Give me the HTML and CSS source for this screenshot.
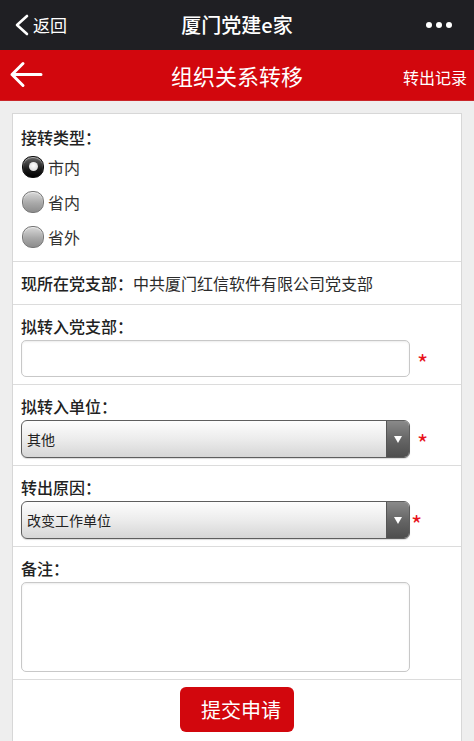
FILE: index.html
```html
<!DOCTYPE html>
<html lang="zh-CN">
<head>
<meta charset="utf-8">
<title>组织关系转移</title>
<link rel="stylesheet" href="styles.css">
</head>
<body>
<div class="topbar">
  <div class="top-left">
    <svg class="chev" width="16" height="24" viewBox="0 0 16 24"><polyline points="13,3 3,12 13,21" fill="none" stroke="#fff" stroke-width="2.6" stroke-linecap="round" stroke-linejoin="round"/></svg>
    <span class="back-text">返回</span>
  </div>
  <div class="top-title">厦门党建e家</div>
  <div class="top-right"><span class="dot"></span><span class="dot"></span><span class="dot"></span></div>
</div>
<div class="navbar">
  <div class="nav-left">
    <svg width="34" height="28" viewBox="0 0 34 28"><path d="M3 13.5 H32 M14 2.5 L3 13.5 L14 24.5" fill="none" stroke="#fff" stroke-width="3" stroke-linecap="round" stroke-linejoin="round"/></svg>
  </div>
  <div class="nav-title">组织关系转移</div>
  <div class="nav-right">转出记录</div>
</div>
<div class="main">
  <div class="card">
    <div class="row row-type">
      <div class="label">接转类型：</div>
      <div class="radios">
        <div class="radio-item"><span class="radio checked"><span class="radio-dot"></span></span><span class="radio-text">市内</span></div>
        <div class="radio-item"><span class="radio"></span><span class="radio-text">省内</span></div>
        <div class="radio-item"><span class="radio"></span><span class="radio-text">省外</span></div>
      </div>
    </div>
    <div class="row row-info">
      <span class="label">现所在党支部：</span><span class="value">中共厦门红信软件有限公司党支部</span>
    </div>
    <div class="row row-field">
      <div class="label">拟转入党支部：</div>
      <div class="field-line">
        <div class="text-input"></div>
        <span class="star">*</span>
      </div>
    </div>
    <div class="row row-field">
      <div class="label">拟转入单位：</div>
      <div class="field-line">
        <div class="select"><span class="select-text">其他</span><span class="select-btn"><span class="tri"></span></span></div>
        <span class="star">*</span>
      </div>
    </div>
    <div class="row row-field">
      <div class="label">转出原因：</div>
      <div class="field-line">
        <div class="select"><span class="select-text">改变工作单位</span><span class="select-btn"><span class="tri"></span></span></div>
        <span class="star tight">*</span>
      </div>
    </div>
    <div class="row row-field">
      <div class="label">备注：</div>
      <div class="field-line">
        <div class="textarea"></div>
      </div>
    </div>
    <div class="row-submit">
      <div class="btn">提交申请</div>
    </div>
  </div>
</div>
</body>
</html>
```
FILE: styles.css
```css
* { box-sizing: border-box; }
html, body { margin: 0; padding: 0; }
body {
  width: 474px;
  min-height: 741px;
  background: #eeeeee;
  font-family: "Noto Sans CJK SC", "Noto Sans", "Liberation Sans", sans-serif;
  color: #2a2a2a;
  overflow: hidden;
}
.topbar {
  height: 50px;
  background: #1f1f23;
  display: grid;
  grid-template-columns: 1fr auto 1fr;
  align-items: center;
  color: #fff;
}
.top-left {
  display: flex;
  align-items: center;
  padding-left: 14px;
}
.chev { display: block; margin-right: 3px; }
.back-text { font-size: 17px; line-height: 24px; }
.top-title { font-size: 20px; font-weight: 500; line-height: 28px; }
.top-right {
  display: flex;
  justify-content: flex-end;
  gap: 4px;
  padding-right: 22px;
}
.dot {
  width: 6px; height: 6px;
  border-radius: 50%;
  background: #fff;
}
.navbar {
  height: 51px;
  background: #d2070d;
  border-bottom: 1px solid #c9262a;
  display: grid;
  grid-template-columns: 1fr auto 1fr;
  align-items: center;
  color: #fff;
}
.nav-left { padding-left: 9px; display: flex; align-items: center; }
.nav-left svg { display: block; }
.nav-title { font-size: 22px; line-height: 30px; }
.nav-right {
  text-align: right;
  font-size: 16px;
  padding-right: 7px;
  padding-top: 3px;
}
.main {
  padding: 12px 12px 0 12px;
}
.card {
  background: #fff;
  border: 1px solid #d7d7d7;
  border-bottom: none;
  min-height: 640px;
}
.row {
  border-bottom: 1px solid #dcdcdc;
  padding: 0 8px;
}
.label {
  font-size: 16px;
  font-weight: 500;
  line-height: 24px;
  color: #222;
}
.row-type { padding-top: 11px; padding-bottom: 7px; }
.radio-item {
  height: 35px;
  display: flex;
  align-items: center;
}
.radio {
  width: 22px; height: 22px;
  margin-left: 1px;
  margin-right: 4px;
  border-radius: 10px;
  border: 1px solid #777;
  background: linear-gradient(#d8d8d8, #a9a9a9 55%, #8d8d8d);
  box-shadow: inset 0 1px 1px rgba(255,255,255,0.5);
  display: flex;
  align-items: center;
  justify-content: center;
}
.radio.checked {
  border: 1px solid #111;
  background: linear-gradient(#666, #1c1c1c 60%, #000);
}
.radio-dot {
  width: 9px; height: 9px;
  border-radius: 50%;
  background: radial-gradient(circle at 50% 40%, #fff, #d0d0d0);
}
.radio-text { font-size: 16px; line-height: 22px; color: #333; }
.row-info {
  padding-top: 10px;
  padding-bottom: 10px;
  line-height: 22px;
}
.row-info .label { line-height: 22px; }
.value { font-size: 16px; color: #2b2b2b; }
.row-field { padding-top: 9px; padding-bottom: 7px; }
.field-line {
  display: flex;
  align-items: center;
  margin-top: 2px;
}
.text-input {
  width: 389px;
  height: 37px;
  border: 1px solid #c8c8c8;
  border-radius: 5px;
  background: #fff;
  box-shadow: inset 0 1px 2px rgba(0,0,0,0.08);
}
.textarea {
  width: 389px;
  height: 90px;
  border: 1px solid #c8c8c8;
  border-radius: 5px;
  background: #fff;
  box-shadow: inset 0 1px 2px rgba(0,0,0,0.08);
}
.select {
  width: 389px;
  height: 38px;
  border: 1px solid #5e5e5e;
  border-radius: 6px;
  background: linear-gradient(#fdfdfd, #ececec 50%, #d6d6d6);
  display: flex;
  align-items: stretch;
  overflow: hidden;
  box-shadow: 0 1px 1px rgba(0,0,0,0.15);
}
.select-text {
  flex: 1;
  font-size: 14px;
  line-height: 36px;
  padding-left: 5px;
  color: #222;
}
.select-btn {
  width: 23px;
  background: linear-gradient(#8a8a8a, #666 50%, #4e4e4e);
  border-left: 1px solid #555;
  display: flex;
  align-items: center;
  justify-content: center;
}
.tri {
  width: 0; height: 0;
  border-left: 4px solid transparent;
  border-right: 4px solid transparent;
  border-top: 7px solid #fff;
}
.star {
  color: #e8121a;
  font-size: 24px;
  font-weight: 400;
  line-height: 24px;
  margin-left: 7px;
  padding-top: 8px;
}
.star.tight { margin-left: 1px; }
.row-submit {
  padding-top: 7px;
  display: flex;
  justify-content: center;
}
.btn {
  width: 114px;
  height: 45px;
  border-radius: 6px;
  background: #d2070d;
  color: #fff;
  font-size: 20px;
  line-height: 45px;
  text-align: center;
  padding-left: 8px;
}
```
